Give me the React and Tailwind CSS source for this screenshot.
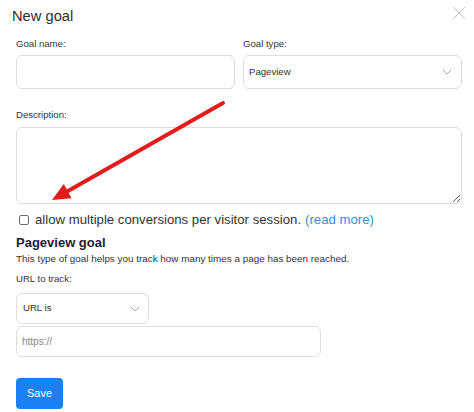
import React from 'react';

const Chevron = ({ className }) => (
  <svg className={className} width="10" height="6" viewBox="0 0 10 6" fill="none">
    <path d="M0.8 0.8 L5 5 L9.2 0.8" stroke="#a8a8a8" strokeWidth="1" />
  </svg>
);

const Arrow = () => (
  <svg
    className="absolute left-0 top-0 pointer-events-none"
    width="474"
    height="412"
    viewBox="0 0 474 412"
  >
    <line x1="223" y1="103" x2="68" y2="191" stroke="#e31b1b" strokeWidth="4" strokeLinecap="round" />
    <polygon points="52,200 63.8,184 71.6,198.2" fill="#e31b1b" />
  </svg>
);

const App = () => {
  return (
    <div className="relative w-[474px] h-[412px] overflow-hidden bg-white font-['Liberation_Sans',Arial,sans-serif] text-[#333]">
      <div className="flex justify-between pt-[6px] pl-[12px] pr-[8px]">
        <h1 className="text-[14.7px] leading-[20px] text-[#2e2e2e]">New goal</h1>
        <svg width="14" height="14" viewBox="0 0 14 14">
          <path d="M1 1 L13 13 M13 1 L1 13" stroke="#c4c4c4" strokeWidth="1" />
        </svg>
      </div>

      <div className="pl-[16px] pr-[12px]">
        <div className="mt-[12px] grid grid-cols-2 gap-[8px]">
          <div>
            <label className="block text-[9.6px] leading-[12px] text-[#34343e]">Goal name:</label>
            <input className="mt-[5px] block w-full h-[34px] rounded-[6px] border border-[#dedede] bg-white px-[6px] text-[9.6px] outline-none" />
          </div>
          <div>
            <label className="block text-[9.6px] leading-[12px] text-[#34343e]">Goal type:</label>
            <div className="mt-[5px] flex items-center justify-between h-[34px] rounded-[6px] border border-[#dedede] pl-[5px] pr-[9px] text-[9.6px] text-[#333]">
              <span>Pageview</span>
              <Chevron />
            </div>
          </div>
        </div>

        <label className="mt-[20px] block text-[9.6px] leading-[12px] text-[#34343e]">Description:</label>
        <textarea className="mt-[6px] block w-full h-[77px] rounded-[6px] border border-[#dedede] bg-white outline-none" />

        <div className="mt-[8px] flex items-center h-[16px] text-[13.2px] leading-[16px] text-[#333]">
          <input
            type="checkbox"
            className="appearance-none ml-[3px] mr-[6px] w-[10px] h-[10px] rounded-[2px] border border-[#6b6b6b] bg-white"
          />
          <span>allow multiple conversions per visitor session.</span>
          <a className="ml-[4px] text-[#3c8de0]">(read more)</a>
        </div>

        <h2 className="mt-[7px] text-[13px] leading-[16px] font-bold text-[#1c1c33]">Pageview goal</h2>
        <p className="mt-[2px] text-[9.9px] leading-[12px] text-[#333]">
          This type of goal helps you track how many times a page has been reached.
        </p>

        <label className="mt-[8px] block text-[9.6px] leading-[12px] text-[#34343e]">URL to track:</label>
        <div className="mt-[8px] flex items-center justify-between w-[133px] h-[31px] rounded-[6px] border border-[#dedede] pl-[6px] pr-[8px] text-[9.6px] text-[#333]">
          <span>URL is</span>
          <Chevron />
        </div>
        <input
          placeholder="https://"
          className="mt-[2px] block w-[305px] h-[31px] rounded-[6px] border border-[#dedede] bg-white px-[5px] text-[10px] text-[#333] placeholder:text-[#8a8a8a] outline-none"
        />

        <button className="mt-[21px] block w-[47px] h-[31px] rounded-[4px] bg-[#1b80f3] text-[11px] text-white">
          Save
        </button>
      </div>

      <Arrow />
    </div>
  );
};

export default App;
